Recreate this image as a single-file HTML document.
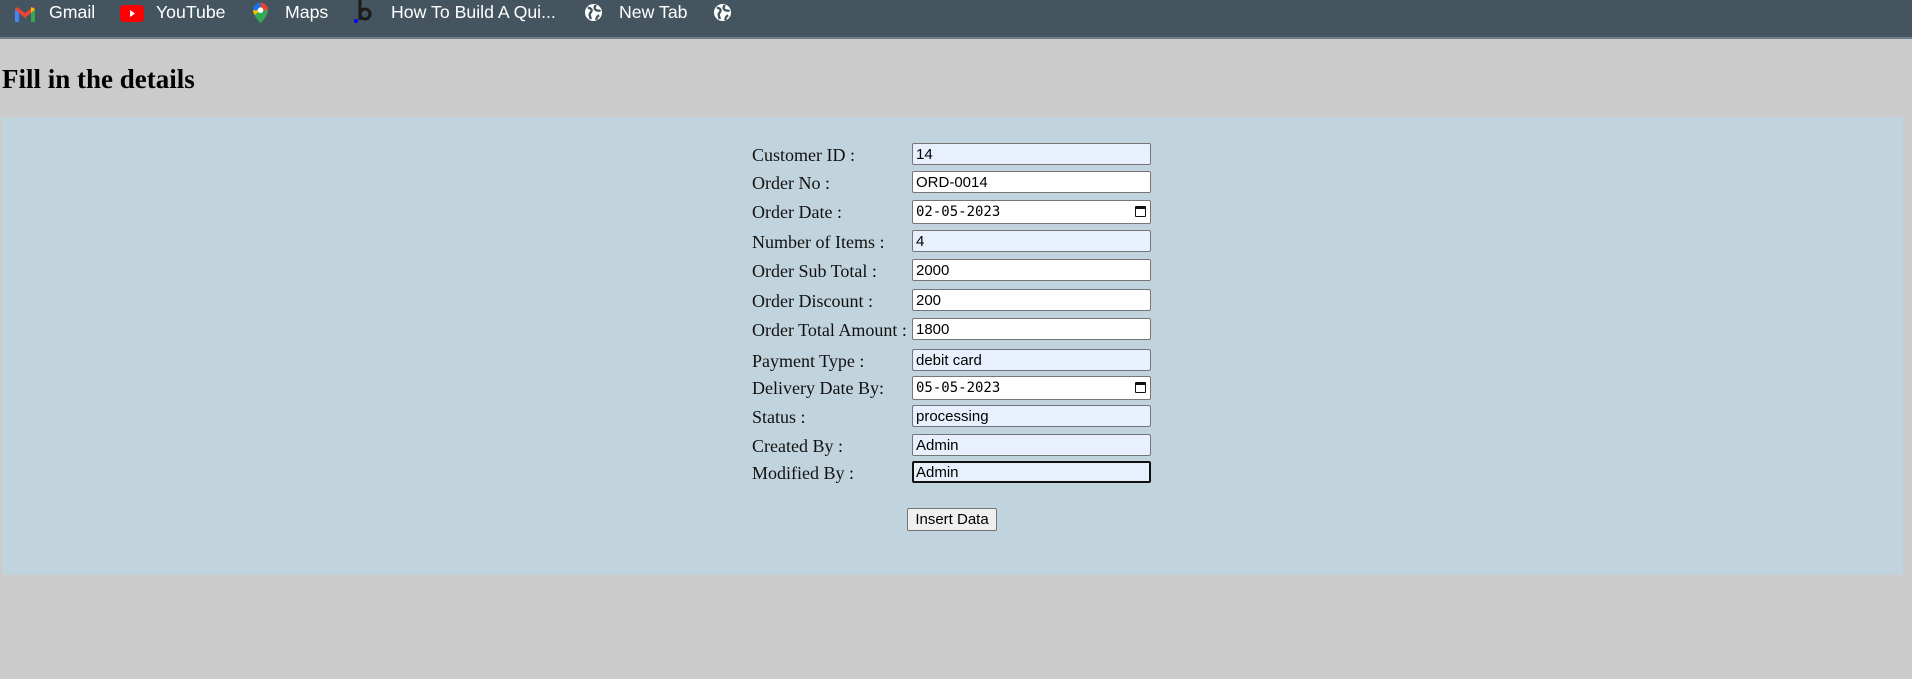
<!DOCTYPE html>
<html><head><meta charset="utf-8"><style>
*{margin:0;padding:0;box-sizing:border-box}
body{width:1912px;height:679px;background:#cbcbcb;position:relative;overflow:hidden;font-family:"Liberation Serif",serif}
.bar{position:absolute;left:0;top:0;width:1912px;height:39px;background:#45555f;border-bottom:2px solid #6f7d87}
.bk{position:absolute;top:1px;color:#fff;font:17.7px "Liberation Sans",sans-serif;line-height:22px;white-space:nowrap}
h2{position:absolute;left:2px;top:64px;font:bold 27px "Liberation Serif",serif;color:#000}
.panel{position:absolute;left:2px;top:117px;width:1901px;height:458px;background:#c1d3dc}
.lb{position:absolute;left:752px;font-size:18px;color:#111;line-height:22px;white-space:nowrap;margin-top:1px}
.in{position:absolute;left:912px;width:239px;height:22px;background:#fff;border:1px solid #767676;border-radius:2px;font:15px "Liberation Sans",sans-serif;padding-left:3px;line-height:21px;color:#000}
.af{background:#e8f0fe}
.dt{font-family:"DejaVu Sans Mono","Liberation Mono",monospace;font-size:14px;height:24px;line-height:22px}
.cal{position:absolute;right:4px;top:5px;width:11px;height:11px;border:1.5px solid #111;border-top-width:3px;border-radius:1px}
.btn{position:absolute;left:907px;top:508px;width:90px;height:23px;background:#efefef;border:1px solid #767676;border-radius:2px;font:15px "Liberation Sans",sans-serif;text-align:center;line-height:21px}
</style></head><body>
<div class="bar">
<svg style="position:absolute;left:14px;top:6px" width="22" height="17" viewBox="0 0 22 17"><path d="M1 3v13h4V7l6 5 6-5v9h4V3l-2-2-8 6-8-6z" fill="#ea4335"/><path d="M1 3v13h4V7z" fill="#4285f4"/><path d="M17 7v9h4V3z" fill="#34a853"/><path d="M21 3l-4 4V1z" fill="#fbbc04"/></svg>
<div class="bk" style="left:49px">Gmail</div>
<svg style="position:absolute;left:120px;top:5px" width="24" height="17"><rect width="24" height="17" rx="4" fill="#f00"/><path d="M10 5l5 3.5-5 3.5z" fill="#fff"/></svg>
<div class="bk" style="left:156px">YouTube</div>
<svg style="position:absolute;left:253px;top:2px" width="15" height="22" viewBox="0 0 16 22"><path d="M8 0a8 8 0 0 0-8 8c0 6 8 14 8 14s8-8 8-14a8 8 0 0 0-8-8z" fill="#34a853"/><path d="M8 0a8 8 0 0 0-8 8l8 0z" fill="#1a73e8"/><path d="M8 0a8 8 0 0 1 8 8H8z" fill="#ea4335"/><path d="M0 8c0 2 1 4 2 5l6-5z" fill="#fbbc04"/><circle cx="8" cy="8" r="3" fill="#fff"/></svg>
<div class="bk" style="left:285px">Maps</div>
<svg style="position:absolute;left:354px;top:0" width="18" height="24"><circle cx="2" cy="21" r="2" fill="#00f"/><path d="M6 0v20M6 14a5 5 0 1 0 10 0a5 5 0 1 0-10 0" stroke="#1b1b1b" stroke-width="3" fill="none"/></svg>
<div class="bk" style="left:391px">How To Build A Qui...</div>
<svg style="position:absolute;left:584px;top:3px" width="19" height="19" viewBox="0 0 20 20"><circle cx="10" cy="10" r="9" fill="#fff"/><path d="M4 5c2 0 4 1 4 3s-2 2-2 4 1 3 1 5M12 2c0 2-2 3 0 5s4 0 5 2M13 18c0-3 1-4 3-5" stroke="#45555f" stroke-width="2.5" fill="none"/></svg>
<div class="bk" style="left:619px">New Tab</div>
<svg style="position:absolute;left:713px;top:3px" width="19" height="19" viewBox="0 0 20 20"><circle cx="10" cy="10" r="9" fill="#fff"/><path d="M4 5c2 0 4 1 4 3s-2 2-2 4 1 3 1 5M12 2c0 2-2 3 0 5s4 0 5 2M13 18c0-3 1-4 3-5" stroke="#45555f" stroke-width="2.5" fill="none"/></svg>
</div>
<h2>Fill in the details</h2>
<div class="panel"></div>

<div class="lb" style="top:143px">Customer ID :</div><div class="in af" style="top:143px">14</div>
<div class="lb" style="top:171px">Order No :</div><div class="in" style="top:171px">ORD-0014</div>
<div class="lb" style="top:200px">Order Date :</div><div class="in dt" style="top:200px">02-05-2023<span class="cal"></span></div>
<div class="lb" style="top:230px">Number of Items :</div><div class="in af" style="top:230px">4</div>
<div class="lb" style="top:259px">Order Sub Total :</div><div class="in" style="top:259px">2000</div>
<div class="lb" style="top:289px">Order Discount :</div><div class="in" style="top:289px">200</div>
<div class="lb" style="top:318px">Order Total Amount :</div><div class="in" style="top:318px">1800</div>
<div class="lb" style="top:349px">Payment Type :</div><div class="in af" style="top:349px">debit card</div>
<div class="lb" style="top:376px">Delivery Date By:</div><div class="in dt" style="top:376px">05-05-2023<span class="cal"></span></div>
<div class="lb" style="top:405px">Status :</div><div class="in af" style="top:405px">processing</div>
<div class="lb" style="top:434px">Created By :</div><div class="in af" style="top:434px">Admin</div>
<div class="lb" style="top:461px">Modified By :</div><div class="in af" style="top:461px;border:2px solid #111;padding-left:2px;line-height:19px">Admin</div>
<div class="btn">Insert Data</div>
</body></html>
